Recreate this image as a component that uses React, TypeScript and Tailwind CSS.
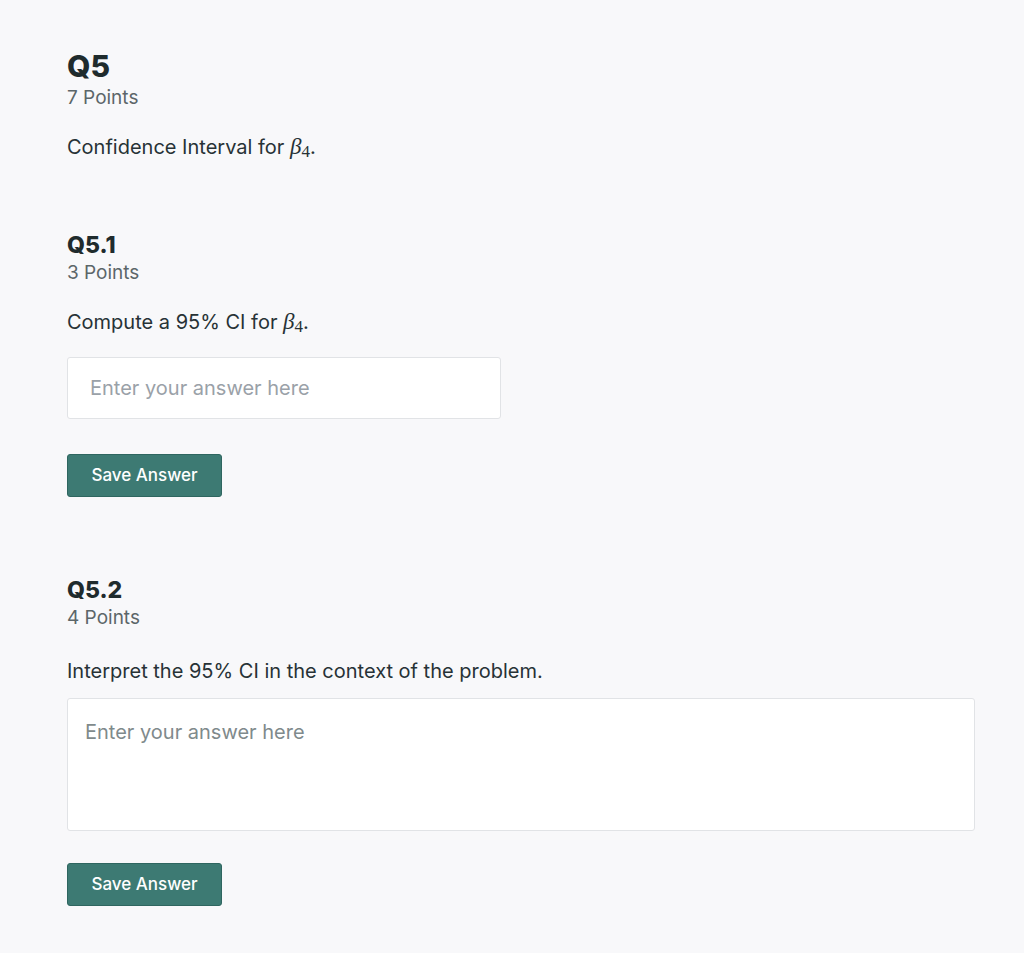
const Beta4 = () => (
  <span className="font-['Liberation_Serif',serif] text-[23px]">
    <span className="italic">β</span>
    <span className="text-[17px] relative top-[3px]">4</span>.
  </span>
);

const SaveButton = () => (
  <button
    type="button"
    className="h-[43px] w-[155px] rounded-[3px] border border-[#2f6660] bg-[#3d7a73] text-[17px] font-medium text-white"
  >
    Save Answer
  </button>
);

export default function App() {
  return (
    <div className="min-h-[953px] bg-[#f8f8fa] px-[67px] pt-[48px] font-['Inter',sans-serif] text-[#273236]">
      <div>
        <h2 className="text-[30px] font-extrabold leading-[36px] text-[#1f2b2d]">Q5</h2>
        <div className="mt-[2px] text-[19px] leading-[24px] text-[#5c6669]">7 Points</div>
        <p className="mt-[24px] text-[20px] leading-[26px]">
          Confidence Interval for <Beta4 />
        </p>
      </div>

      <div className="mt-[68px]">
        <h3 className="text-[23px] font-extrabold leading-[30px] text-[#1f2b2d]">Q5.1</h3>
        <div className="mt-[1px] text-[19px] leading-[24px] text-[#5c6669]">3 Points</div>
        <p className="mt-[24px] text-[20px] leading-[26px]">
          Compute a 95% CI for <Beta4 />
        </p>
        <input
          type="text"
          placeholder="Enter your answer here"
          className="mt-[20px] block h-[62px] w-[434px] rounded-[3px] border border-[#e1e3e6] bg-white px-[22px] text-[20px] placeholder:text-[#9aa1a8] outline-none"
        />
        <div className="mt-[35px]">
          <SaveButton />
        </div>
      </div>

      <div className="mt-[78px]">
        <h3 className="text-[23px] font-extrabold leading-[30px] text-[#1f2b2d]">Q5.2</h3>
        <div className="mt-[1px] text-[19px] leading-[24px] text-[#5c6669]">4 Points</div>
        <p className="mt-[28px] text-[20px] leading-[26px]">
          Interpret the 95% CI in the context of the problem.
        </p>
        <textarea
          placeholder="Enter your answer here"
          className="mt-[14px] block h-[133px] w-[908px] resize-none rounded-[3px] border border-[#e1e3e6] bg-white px-[17px] py-[20px] text-[20px] leading-[26px] placeholder:text-[#7f8a8c] outline-none"
        />
        <div className="mt-[32px]">
          <SaveButton />
        </div>
      </div>
    </div>
  );
}
